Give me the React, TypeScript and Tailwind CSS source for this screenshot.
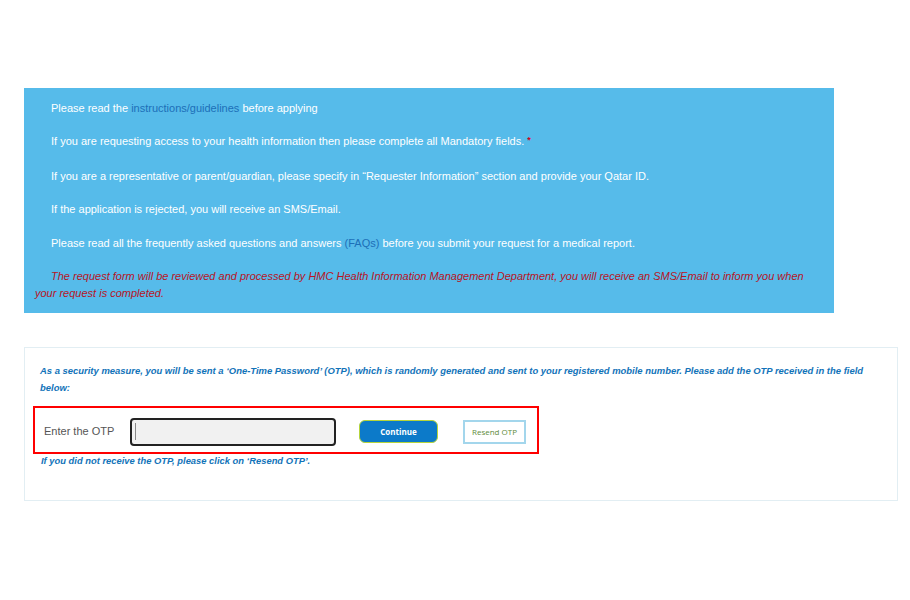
export default function App() {
  const paras = [
    "If you are a representative or parent/guardian, please specify in “Requester Information” section and provide your Qatar ID.",
    "If the application is rejected, you will receive an SMS/Email.",
  ];

  return (
    <div className="min-h-screen bg-white pt-[88px] font-['Liberation_Sans',Arial,sans-serif]">
      {/* info panel */}
      <div className="ml-[24px] w-[810px] bg-[#56bbea] px-[11px] pt-[11.5px] pb-[10.5px] text-[11px] leading-[17px] text-white">
        <p className="indent-4 mb-[16.5px]">
          Please read the <a className="text-[#1d6fb8]">instructions/guidelines</a> before applying
        </p>
        <p className="indent-4 mb-[16.5px]">
          If you are requesting access to your health information then please complete all Mandatory fields.{" "}
          <span className="relative -top-[2px] text-[9px] font-bold text-[#d0021b]">*</span>
        </p>
        {paras.map((t, i) => (
          <p key={i} className="indent-4 mb-[16.5px]">
            {t}
          </p>
        ))}
        <p className="indent-4 mb-[16.5px]">
          Please read all the frequently asked questions and answers{" "}
          <a className="text-[#1d6fb8]">(FAQs)</a> before you submit your request for a medical report.
        </p>
        <p className="indent-4 italic text-[#b8141f]">
          The request form will be reviewed and processed by HMC Health Information Management Department, you will
          receive an SMS/Email to inform you when your request is completed.
        </p>
      </div>

      {/* OTP panel */}
      <div className="ml-[24px] mt-[34px] h-[154px] w-[874px] border border-[#e2eef3] px-[8px] pt-[14.5px]">
        <p className="pl-[7px] pr-[8px] text-[9.45px] leading-[17px] font-bold italic text-[#1273b9]">
          As a security measure, you will be sent a ‘One-Time Password’ (OTP), which is randomly generated and sent to
          your registered mobile number. Please add the OTP received in the field below:
        </p>

        <div className="mt-[9.5px] flex h-[48px] w-[506px] items-center border-2 border-[#ff0000] pl-[9px] pt-[4px]">
          <span className="w-[86px] text-[11px] text-[#555555]">Enter the OTP</span>
          <div className="flex h-[28px] w-[206px] items-center rounded-[4px] border-2 border-[#222222] bg-[#f1f1f1] pl-[3px]">
            <span className="h-[17px] w-px bg-[#888888]" />
          </div>
          <button className="ml-[23px] h-[23px] w-[79px] rounded-[6px] border border-[#b6d43a] bg-[#0c7ac9] font-['Open_Sans',sans-serif] text-[8px] font-bold text-white">
            Continue
          </button>
          <button className="ml-[25px] h-[24px] w-[63px] border-2 border-[#a3d6ec] bg-white font-['Open_Sans',sans-serif] text-[8px] text-[#5e8c3c]">
            Resend OTP
          </button>
        </div>

        <p className="pl-[8px] text-[9.4px] leading-[14px] font-bold italic text-[#1273b9]">
          If you did not receive the OTP, please click on ‘Resend OTP’.
        </p>
      </div>
    </div>
  );
}
